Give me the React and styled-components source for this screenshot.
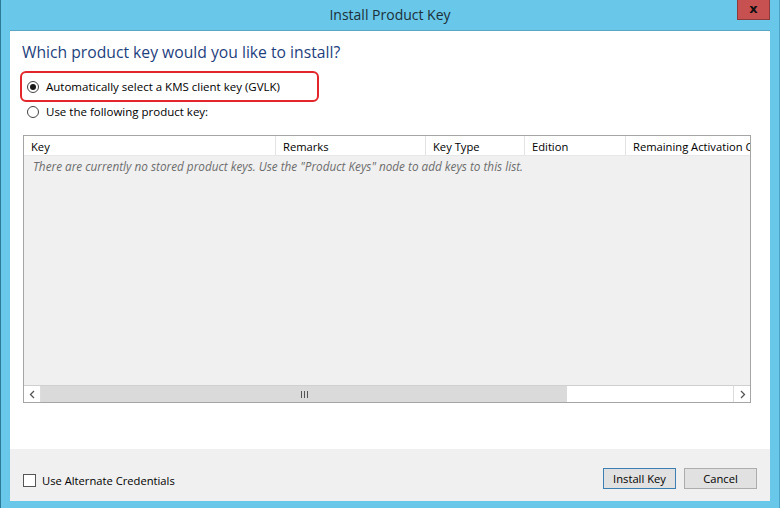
import React from "react";
import styled, { createGlobalStyle } from "styled-components";

const Global = createGlobalStyle`
  html, body { margin: 0; padding: 0; overflow: hidden; background: #69c8ea; }
  * { box-sizing: border-box; }
`;

const FONT = `"Open Sans", "Noto Sans", "Liberation Sans", sans-serif`;

const Window = styled.div`
  width: 780px;
  height: 508px;
  background: #69c8ea;
  border-left: 1px solid #2b7b98;
  border-right: 1px solid #4aa3c4;
  display: flex;
  flex-direction: column;
  font-family: ${FONT};
  color: #000;
`;

const TitleBar = styled.div`
  height: 30px;
  display: grid;
  grid-template-columns: 1fr auto 1fr;
  align-items: start;
`;

const Title = styled.div`
  grid-column: 2;
  font-size: 14px;
  line-height: 30px;
  color: #1c2f38;
`;

const CloseButton = styled.div`
  grid-column: 3;
  justify-self: end;
  margin-right: 9px;
  width: 33px;
  height: 20px;
  background: #c75050;
  border: 1px solid #8c3a3a;
  border-top: none;
  display: flex;
  align-items: center;
  justify-content: center;
  font-family: "DejaVu Sans", sans-serif;
  font-weight: bold;
  font-size: 13px;
  color: #111;
  line-height: 1;
  padding-bottom: 2px;
`;

const Client = styled.div`
  flex: 1;
  margin: 0 9px 7px 9px;
  display: flex;
  flex-direction: column;
  border-top: 1px solid #5aa6c4;
`;

const Content = styled.div`
  flex: 1;
  background: #fff;
  padding: 11px 0 0 12px;
  display: flex;
  flex-direction: column;
`;

const Heading = styled.div`
  font-size: 15.7px;
  line-height: 20px;
  color: #1e3f7e;
  margin-bottom: 9px;
`;

const Highlight = styled.div`
  width: 299px;
  height: 31px;
  margin-left: -2px;
  border: 2px solid #e2262c;
  border-radius: 6px;
  display: flex;
  align-items: center;
  padding-left: 5px;
`;

const OptionRow = styled.label`
  display: flex;
  align-items: center;
  gap: 7px;
  font-size: 11.5px;
  line-height: 16px;
  color: #000;
`;

const PlainOption = styled(OptionRow)`
  margin: 2px 0 0 5px;
`;

const RadioCircle = styled.span`
  width: 12px;
  height: 12px;
  border-radius: 50%;
  border: 1px solid #444;
  background: #fff;
  display: flex;
  align-items: center;
  justify-content: center;
  flex: none;
  &::after {
    content: "";
    width: 6px;
    height: 6px;
    border-radius: 50%;
    background: ${(p) => (p.$checked ? "#1a1a1a" : "transparent")};
  }
`;

const Table = styled.div`
  margin-top: 15px;
  margin-left: 1px;
  width: 728px;
  height: 268px;
  border: 1px solid #a5a5a5;
  background: #f0f0f0;
  display: flex;
  flex-direction: column;
  overflow: hidden;
`;

const HeaderRow = styled.div`
  display: flex;
  height: 20px;
  background: #fff;
  border-bottom: 1px solid #e8e8e8;
  flex: none;
`;

const HeaderCell = styled.div`
  width: ${(p) => p.$w}px;
  flex: none;
  padding: 1px 0 0 7px;
  font-size: 11.2px;
  line-height: 19px;
  white-space: nowrap;
  overflow: hidden;
  border-right: 1px solid #e3e3e3;
`;

const Body = styled.div`
  flex: 1;
`;

const EmptyText = styled.div`
  font-size: 11.75px;
  font-style: italic;
  color: #6d6d6d;
  padding: 2px 0 0 9px;
  line-height: 16px;
  white-space: nowrap;
`;

const ScrollBar = styled.div`
  height: 17px;
  display: flex;
  border-top: 1px solid #d0d0d0;
  background: #fff;
  flex: none;
`;

const ArrowBtn = styled.div`
  width: 17px;
  flex: none;
  display: flex;
  align-items: center;
  justify-content: center;
  background: #fff;
  ${(p) => (p.$left ? "border-right: 1px solid #dcdcdc;" : "border-left: 1px solid #dcdcdc;")}
`;

const Track = styled.div`
  flex: 1;
  display: flex;
`;

const Thumb = styled.div`
  width: 526px;
  background: #dadada;
  display: flex;
  align-items: center;
  justify-content: center;
`;

const Grip = styled.div`
  display: flex;
  gap: 2px;
  & > span {
    width: 1px;
    height: 7px;
    background: #555;
  }
`;

const Footer = styled.div`
  height: 52px;
  background: #f0f0f0;
  display: flex;
  align-items: center;
  justify-content: space-between;
  padding: 0 13px 0 13px;
  flex: none;
`;

const CheckRow = styled.label`
  display: flex;
  align-items: center;
  gap: 6px;
  font-size: 11.2px;
  margin-top: 10px;
`;

const CheckBox = styled.span`
  width: 13px;
  height: 13px;
  border: 1px solid #555;
  background: #fff;
  flex: none;
`;

const Buttons = styled.div`
  display: flex;
  gap: 8px;
  margin-top: 6px;
`;

const Button = styled.div`
  width: 73px;
  height: 21px;
  background: #e1e1e1;
  border: 1px solid ${(p) => (p.$default ? "#3c7fb1" : "#adadad")};
  font-size: 11.2px;
  display: flex;
  align-items: center;
  justify-content: center;
  color: #000;
`;

const Chevron = ({ left }) => (
  <svg width="7" height="9" viewBox="0 0 7 9">
    <path
      d={left ? "M5 1 L1.5 4.5 L5 8" : "M2 1 L5.5 4.5 L2 8"}
      fill="none"
      stroke="#555"
      strokeWidth="1.3"
    />
  </svg>
);

const columns = [
  { label: "Key", w: 252 },
  { label: "Remarks", w: 150 },
  { label: "Key Type", w: 99 },
  { label: "Edition", w: 101 },
  { label: "Remaining Activation Count", w: 126 },
];

export default function App() {
  return (
    <>
      <Global />
      <Window>
        <TitleBar>
          <Title>Install Product Key</Title>
          <CloseButton>x</CloseButton>
        </TitleBar>
        <Client>
          <Content>
            <Heading>Which product key would you like to install?</Heading>
            <Highlight>
              <OptionRow>
                <RadioCircle $checked />
                Automatically select a KMS client key (GVLK)
              </OptionRow>
            </Highlight>
            <PlainOption>
              <RadioCircle />
              Use the following product key:
            </PlainOption>
            <Table>
              <HeaderRow>
                {columns.map((c) => (
                  <HeaderCell key={c.label} $w={c.w}>
                    {c.label}
                  </HeaderCell>
                ))}
              </HeaderRow>
              <Body>
                <EmptyText>
                  There are currently no stored product keys. Use the "Product Keys" node to add keys to this list.
                </EmptyText>
              </Body>
              <ScrollBar>
                <ArrowBtn $left>
                  <Chevron left />
                </ArrowBtn>
                <Track>
                  <Thumb>
                    <Grip>
                      <span />
                      <span />
                      <span />
                    </Grip>
                  </Thumb>
                </Track>
                <ArrowBtn>
                  <Chevron />
                </ArrowBtn>
              </ScrollBar>
            </Table>
          </Content>
          <Footer>
            <CheckRow>
              <CheckBox />
              Use Alternate Credentials
            </CheckRow>
            <Buttons>
              <Button $default>Install Key</Button>
              <Button>Cancel</Button>
            </Buttons>
          </Footer>
        </Client>
      </Window>
    </>
  );
}
